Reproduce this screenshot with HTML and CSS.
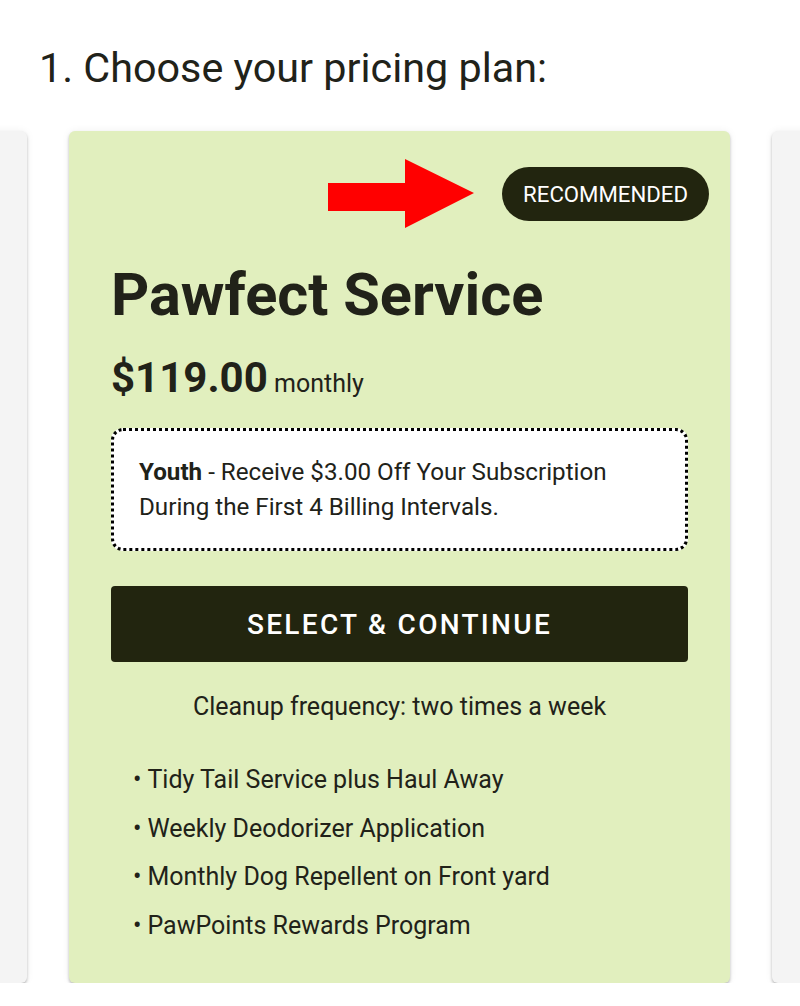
FILE: index.html
```html
<!doctype html>
<html>
<head>
<title>Choose your pricing plan</title>
<link rel="stylesheet" href="styles.css">
</head>
<body>
<h1 class="step">1. Choose your pricing plan:</h1>
<section class="plans">
<div class="plan side"></div>
<div class="plan featured">
<div class="plan-top">
<svg class="arrow" width="146" height="70" viewBox="0 0 146 70">
<polygon points="0,24 77,24 77,0 146,34 77,69 77,52 0,52" fill="#ff0000"/>
</svg>
<span class="badge">RECOMMENDED</span>
</div>
<h2 class="plan-name">Pawfect Service</h2>
<div class="price"><b>$119.00</b> monthly</div>
<div class="promo"><b>Youth</b> - Receive $3.00 Off Your Subscription During the First 4 Billing Intervals.</div>
<button class="select">SELECT &amp; CONTINUE</button>
<p class="freq">Cleanup frequency: two times a week</p>
<ul class="features">
<li>Tidy Tail Service plus Haul Away</li>
<li>Weekly Deodorizer Application</li>
<li>Monthly Dog Repellent on Front yard</li>
<li>PawPoints Rewards Program</li>
</ul>
</div>
<div class="plan side"></div>
</section>
</body>
</html>
```
FILE: styles.css
```css
body {
	margin : 0;
	background : #fff;
	font-family : Roboto, "Noto Sans", sans-serif;
	color : #212219;
	overflow : hidden;
}
.step {
	font-weight : 400;
	font-size : 41.3px;
	margin : 0;
	padding : 44px 39px 39px;
	line-height : 48px;
}
.plans {
	display : flex;
	justify-content : center;
	gap : 42px;
	margin-left : -1px;
}
.plan {
	flex : 0 0 661px;
	height : 852px;
	border-radius : 6px;
	box-shadow : 0 2px 3px rgba(0,0,0,0.25), 0 0 8px rgba(0,0,0,0.06);
	box-sizing : border-box;
}
.side {
	background : #f4f4f4;
}
.featured {
	background : #e1efbe;
	padding : 36px 42px 0;
}
.plan-top {
	display : flex;
	justify-content : flex-end;
	align-items : center;
	margin-right : -21px;
	gap : 28px;
}
.arrow {
	display : block;
	margin : -8px 0;
}
.badge {
	background : #22250f;
	color : #fff;
	font-size : 22.2px;
	border-radius : 27px;
	height : 54px;
	line-height : 54px;
	padding : 0 21px;
}
.plan-name {
	font-size : 59.5px;
	font-weight : 700;
	margin : 38px 0 0;
	line-height : 72px;
}
.price {
	font-size : 25px;
	line-height : 50px;
	margin-top : 22px;
}
.price b {
	font-size : 42px;
}
.promo {
	margin-top : 19px;
	background : #fff;
	border : 3px dotted #000;
	border-radius : 12px;
	padding : 23.5px 25px;
	font-size : 24.2px;
	line-height : 35px;
}
.select {
	display : block;
	width : 100%;
	height : 76px;
	margin-top : 35px;
	background : #22250f;
	color : #fff;
	border : none;
	border-radius : 4px;
	font-family : Roboto, sans-serif;
	font-size : 28px;
	font-weight : 500;
	letter-spacing : 2.3px;
}
.freq {
	text-align : center;
	font-size : 25px;
	line-height : 30px;
	margin : 30px 0 0;
}
.features {
	list-style : none;
	padding : 0 0 0 22px;
	margin : 34px 0 0;
	font-size : 25px;
}
.features li {
	line-height : 48.7px;
}
.features li::before {
	content : "\2022";
	margin-right : 6px;
}
```
